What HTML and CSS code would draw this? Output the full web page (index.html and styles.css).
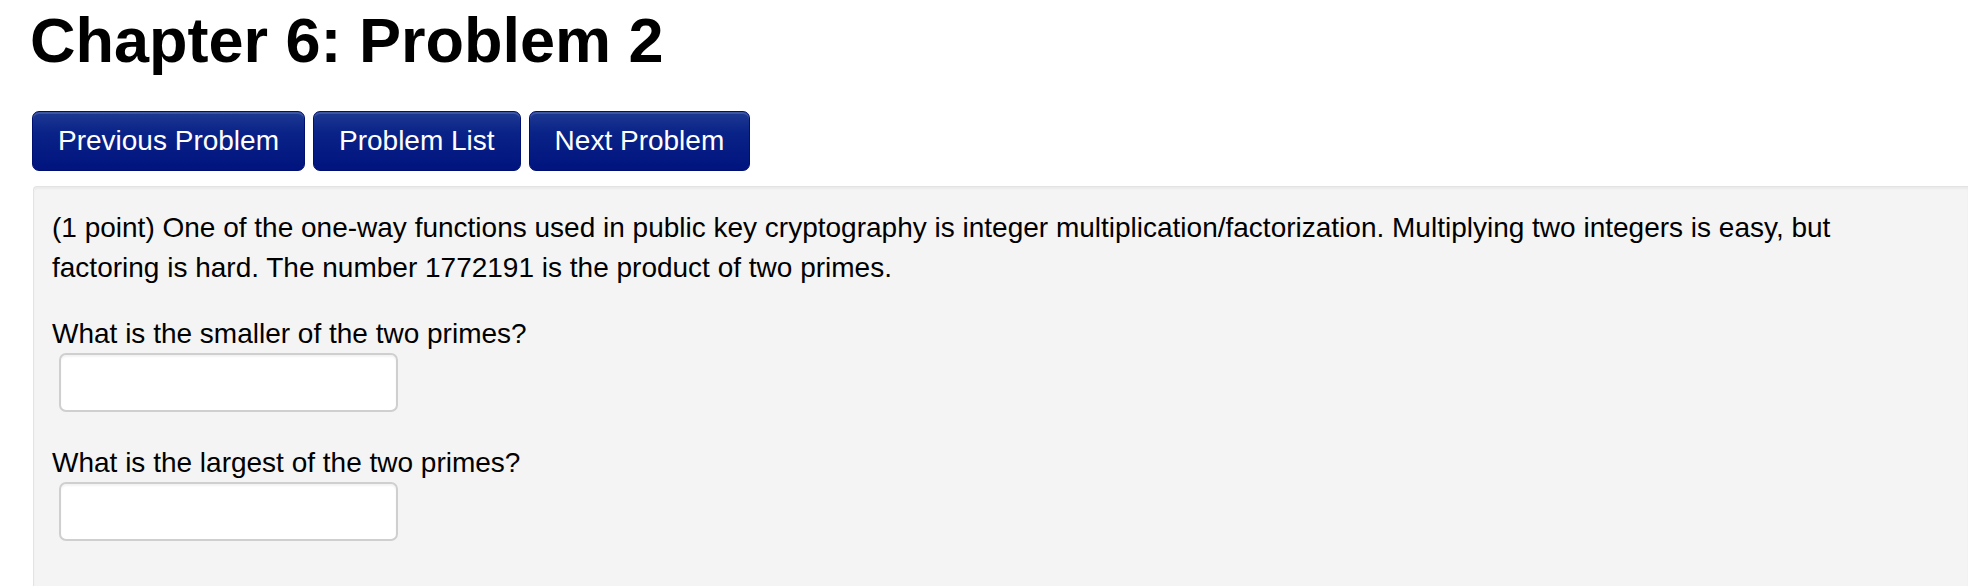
FILE: index.html
```html
<!DOCTYPE html>
<html lang="en">
<head>
<meta charset="UTF-8">
<meta name="viewport" content="width=device-width, initial-scale=1.0">
<title>Chapter 6: Problem 2</title>
<link rel="stylesheet" href="styles.css">
</head>
<body>

<div class="page">
    <h1>Chapter 6: Problem 2</h1>

    <div class="nav">
        <a class="btn" href="#">Previous Problem</a>
        <a class="btn" href="#">Problem List</a>
        <a class="btn" href="#">Next Problem</a>
    </div>

    <div class="problem">
        <p class="intro">(1 point) One of the one-way functions used in public key cryptography is integer multiplication/factorization. Multiplying two integers is easy, but factoring is hard. The number 1772191 is the product of two primes.</p>

        <div class="question">
            <label for="ans1">What is the smaller of the two primes?</label>
            <input type="text" id="ans1" name="ans1">
        </div>

        <div class="question">
            <label for="ans2">What is the largest of the two primes?</label>
            <input type="text" id="ans2" name="ans2">
        </div>
    </div>
</div>

</body>
</html>
```

FILE: styles.css
```css
html, body {
    margin: 0;
    padding: 0;
}
body {
    font-family: "Liberation Sans", Arial, Helvetica, sans-serif;
    color: #000;
    background: #fff;
}
.page {
    padding: 6px 0 0 32px;
}
h1 {
    margin: 0 0 0 -2px;
    font-size: 63px;
    line-height: 68px;
    font-weight: bold;
}
.nav {
    display: flex;
    gap: 8px;
    margin-top: 37px;
}
.btn {
    display: block;
    padding: 9px 25px;
    font-size: 28px;
    line-height: 40px;
    color: #fff;
    text-decoration: none;
    background: linear-gradient(to bottom, #1d3a92 0%, #0a2388 35%, #00137e 100%);
    border: 1px solid #001070;
    border-radius: 7px;
    box-shadow: inset 0 2px 0 rgba(255, 255, 255, 0.15);
}
.problem {
    margin: 15px 0 0 1px;
    padding: 21px 0 46px 18px;
    background: #f4f4f4;
    border: 1px solid #e3e3e3;
    border-right: none;
    border-bottom: none;
    border-radius: 4px 0 0 0;
    box-shadow: inset 0 2px 2px rgba(0, 0, 0, 0.04);
    font-size: 28px;
    line-height: 40px;
}
.intro {
    max-width: 1840px;
    margin: 0 0 26px;
}
.question {
    margin-bottom: 31px;
}
.question:last-child {
    margin-bottom: 0;
}
.question label {
    display: block;
}
.question input {
    display: block;
    box-sizing: border-box;
    width: 339px;
    height: 59px;
    margin: -1px 0 0 7px;
    padding: 8px 12px;
    font-size: 28px;
    background: #fff;
    border: 2px solid #cfcfcf;
    border-radius: 7px;
    box-shadow: inset 0 2px 2px rgba(0, 0, 0, 0.05);
}
```
